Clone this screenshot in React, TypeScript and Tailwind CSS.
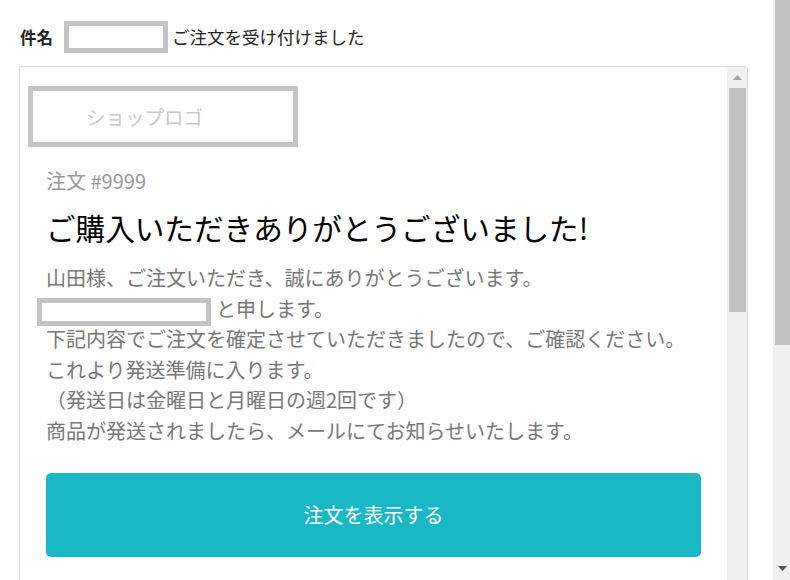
export default function App() {
  return (
    <div className="flex h-[580px] w-[790px] overflow-hidden bg-white font-['Noto_Sans_CJK_JP',sans-serif]">
      <div className="min-w-0 flex-1 pl-[19px] pr-[25px] pt-[21px]">
        <div className="flex h-[32px] items-center">
          <span className="ml-px text-[16.5px] font-bold text-[#222]">件名</span>
          <span className="ml-[11px] h-[32px] w-[104px] border-[5px] border-[#c4c4c4]" />
          <span className="ml-[4px] text-[17.5px] text-[#222]">ご注文を受け付けました</span>
        </div>
        <div className="mt-[13px] flex h-[560px] rounded-[3px] border border-[#d5dde4]">
          <div className="min-w-0 flex-1 px-[26px] pt-[19px]">
            <div className="-ml-[18px] flex h-[61px] w-[270px] items-center border-[5px] border-[#c4c4c4] pl-[53px] text-[19.5px] text-[#c8c8c8]">
              ショップロゴ
            </div>
            <div className="mt-[19px] text-[20px] leading-[30px] text-[#999]">注文 #9999</div>
            <div className="mt-[12px] text-[29.6px] leading-[40px] text-black">ご購入いただきありがとうございました!</div>
            <div className="mt-[15px] text-[20px] leading-[30.6px] text-[#777]">
              <div>山田様、ご注文いただき、誠にありがとうございます。</div>
              <div className="flex h-[30.6px] items-start">
                <span className="-ml-[9px] mr-[5px] mt-[4px] block h-[28px] w-[174px] shrink-0 border-[5px] border-[#c4c4c4]" />
                <span>と申します。</span>
              </div>
              <div>下記内容でご注文を確定させていただきましたので、ご確認ください。</div>
              <div>これより発送準備に入ります。</div>
              <div>（発送日は金曜日と月曜日の週2回です）</div>
              <div>商品が発送されましたら、メールにてお知らせいたします。</div>
            </div>
            <div className="mt-[26px] flex h-[84px] items-center justify-center rounded-[5px] bg-[#1ab7c5] text-[20px] text-white">
              注文を表示する
            </div>
          </div>
          <div className="flex w-[20px] flex-col bg-[#f0f0f0]">
            <div className="flex h-[21px] items-center justify-center">
              <svg width="9" height="5" viewBox="0 0 9 5">
                <polygon points="0,5 9,5 4.5,0" fill="#a3a3a3" />
              </svg>
            </div>
            <div className="ml-[2px] h-[224px] w-[17px] bg-[#c1c1c1]" />
          </div>
        </div>
      </div>
      <div className="flex w-[17px] flex-col bg-[#f0f0f0]">
        <div className="ml-[2px] h-[345px] bg-[#c1c1c1]" />
        <div className="flex-1" />
        <div className="flex h-[24px] items-center justify-center pl-[2px]">
          <svg width="9" height="5" viewBox="0 0 9 5">
            <polygon points="0,0 9,0 4.5,5" fill="#505050" />
          </svg>
        </div>
      </div>
    </div>
  );
}
